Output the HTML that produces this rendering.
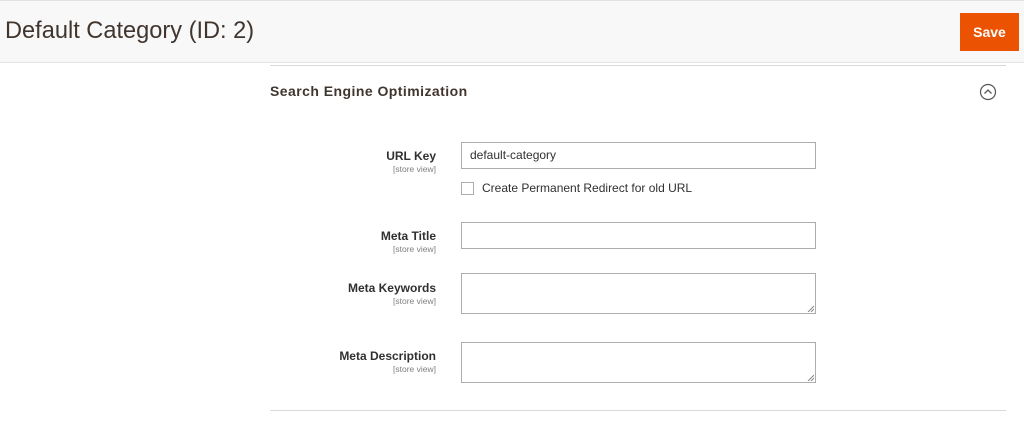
<!DOCTYPE html>
<html><head><style>
body{margin:0;width:1024px;height:421px;background:#fff;font-family:"Liberation Sans",sans-serif;position:relative;overflow:hidden;color:#303030}
.hdr{position:absolute;left:0;top:0;width:1024px;height:63px;background:#f8f8f8;border-top:1px solid #e3e3e3;border-bottom:1px solid #e3e3e3;box-sizing:border-box}
.title{position:absolute;left:5px;top:18px;font-size:23.6px;color:#41362f}
.save{position:absolute;left:960px;top:13px;width:59px;height:38px;background:#eb5202;color:#fff;font-weight:bold;font-size:14px;line-height:38px;text-align:center}
.line{position:absolute;left:270px;width:736px;height:1px;background:#d9d9d9}
.sec{position:absolute;left:270px;top:83px;font-size:14px;font-weight:bold;color:#41362f;letter-spacing:.45px}
.lbl{position:absolute;right:588px;text-align:right;font-size:12px;font-weight:bold;color:#303030}
.lbl small{display:block;font-weight:normal;font-size:8.5px;color:#808080;margin-top:1px}
.in{position:absolute;left:461px;width:355px;border:1px solid #adadad;box-sizing:border-box;background:#fff;font-size:12px;padding-left:8px}
.cb{position:absolute;left:461px;top:182px;width:13px;height:13px;border:1px solid #adadad;box-sizing:border-box}
.cbt{position:absolute;left:482px;top:181px;font-size:12px;color:#303030}
.grip{position:absolute;right:1px;bottom:1px}
</style></head><body>
<div class="hdr"></div>
<div class="title">Default Category (ID: 2)</div>
<div class="save">Save</div>
<div class="line" style="top:65px"></div>
<div class="sec">Search Engine Optimization</div>
<svg style="position:absolute;left:979px;top:83px" width="18" height="18" viewBox="0 0 18 18"><circle cx="9" cy="9" r="7.5" fill="none" stroke="#555" stroke-width="1.2"/><path d="M5.5 10.5L9 7l3.5 3.5" fill="none" stroke="#555" stroke-width="1.3"/></svg>
<div class="lbl" style="top:149px">URL Key<small>[store view]</small></div>
<div class="in" style="top:142px;height:27px;line-height:25px">default-category</div>
<div class="cb"></div><div class="cbt">Create Permanent Redirect for old URL</div>
<div class="lbl" style="top:229px">Meta Title<small>[store view]</small></div>
<div class="in" style="top:222px;height:27px"></div>
<div class="lbl" style="top:281px">Meta Keywords<small>[store view]</small></div>
<div class="in" style="top:273px;height:41px"><svg class="grip" width="7" height="7"><path d="M1 7L7 1M4 7L7 4" stroke="#888"/></svg></div>
<div class="lbl" style="top:349px">Meta Description<small>[store view]</small></div>
<div class="in" style="top:342px;height:41px"><svg class="grip" width="7" height="7"><path d="M1 7L7 1M4 7L7 4" stroke="#888"/></svg></div>
<div class="line" style="top:410px"></div>
</body></html>
